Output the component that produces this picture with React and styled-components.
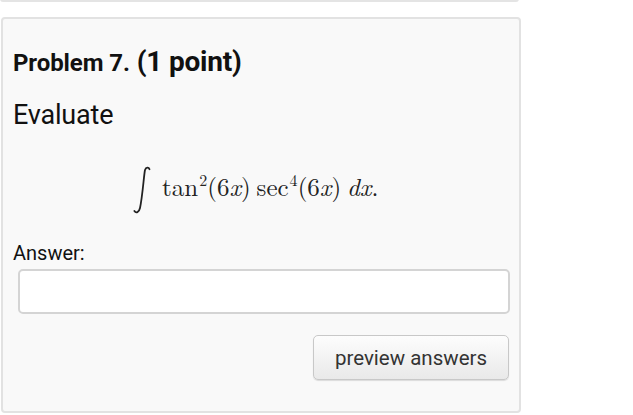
import styled, { createGlobalStyle } from "styled-components";

const GlobalStyle = createGlobalStyle`
  html, body {
    margin: 0;
    padding: 0;
    background: #fff;
  }
  body {
    font-family: Roboto, "Liberation Sans", sans-serif;
    color: #111;
  }
`;

const Page = styled.div`
  width: 633px;
  height: 415px;
  overflow: hidden;
`;

const TopStrip = styled.div`
  width: 519px;
  height: 1px;
  border-bottom: 2px solid #e4e4e4;
  border-radius: 0 0 4px 4px;
  margin-top: -1px;
`;

const Card = styled.div`
  box-sizing: border-box;
  margin: 15px 0 0 1px;
  width: 520px;
  height: 396px;
  background: #f9f9f9;
  border: 2px solid #e2e2e2;
  border-radius: 4px;
  padding: 26px 10px 0 10px;
`;

const Title = styled.h3`
  margin: 0;
  font-size: 24px;
  font-weight: 700;
  line-height: 34px;
  letter-spacing: -0.1px;
`;

const Points = styled.span`
  font-size: 28px;
  margin-left: 7px;
  letter-spacing: -0.2px;
`;

const Prompt = styled.p`
  margin: 17px 0 0 0;
  font-size: 27px;
  line-height: 36px;
  letter-spacing: -0.2px;
`;

const MathRow = styled.div`
  display: flex;
  align-items: center;
  margin: 33px 0 0 120px;
  height: 48px;
`;

const Integral = styled.svg`
  width: 18px;
  height: 48px;
  margin-right: 11px;
`;

const Expr = styled.span`
  font-family: "Latin Modern Roman", "Liberation Serif", serif;
  font-size: 25px;
  color: #222;
  margin-top: -9px;
  word-spacing: -2.5px;
`;

const Sup = styled.sup`
  font-size: 16px;
  line-height: 0;
  vertical-align: 10px;
  margin-left: 1px;
`;

const Var = styled.i`
  font-style: italic;
`;

const Label = styled.div`
  margin-top: 27px;
  font-size: 20px;
  line-height: 24px;
`;

const Input = styled.input`
  box-sizing: border-box;
  display: block;
  width: 492px;
  height: 45px;
  margin: 4px 0 0 5px;
  background: #fff;
  border: 2px solid #d4d4d4;
  border-radius: 5px;
  outline: none;
`;

const Actions = styled.div`
  display: flex;
  justify-content: flex-end;
  margin: 21px 0 0 0;
`;

const Button = styled.button`
  box-sizing: border-box;
  width: 196px;
  height: 45px;
  font-family: Roboto, "Liberation Sans", sans-serif;
  font-size: 20.5px;
  color: #333;
  background: linear-gradient(#fdfdfd, #e9e9e9);
  border: 1px solid #c8c8c8;
  border-radius: 5px;
  box-shadow: 0 1px 1px rgba(0, 0, 0, 0.12);
`;

export default function App() {
  return (
    <Page>
      <GlobalStyle />
      <TopStrip />
      <Card>
        <Title>
          Problem 7.<Points>(1 point)</Points>
        </Title>
        <Prompt>Evaluate</Prompt>
        <MathRow>
          <Integral viewBox="0 0 18 48">
            <path
              d="M16.5 3.2 C15.8 1.2 13 0.8 12 4 C11 8 9.6 30 7 42 C6 46.5 3 47.5 1.4 45"
              fill="none"
              stroke="#222"
              strokeWidth="1.8"
              strokeLinecap="round"
            />
          </Integral>
          <Expr>
            tan<Sup>2</Sup>(6<Var>x</Var>) sec<Sup>4</Sup>(6<Var>x</Var>) <Var>dx</Var>.
          </Expr>
        </MathRow>
        <Label>Answer:</Label>
        <Input type="text" />
        <Actions>
          <Button>preview answers</Button>
        </Actions>
      </Card>
    </Page>
  );
}
